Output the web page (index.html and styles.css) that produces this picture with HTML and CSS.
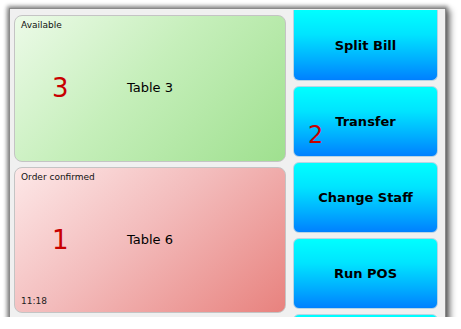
FILE: index.html
```html
<!DOCTYPE html>
<html>
<head>
<meta charset="utf-8">
<link rel="stylesheet" href="styles.css">
</head>
<body>
<div class="frame">
  <div class="tables">
    <div class="card available">
      <div class="status">Available</div>
      <div class="middle">
        <span class="count">3</span>
        <span class="name">Table 3</span>
      </div>
      <div class="time"></div>
    </div>
    <div class="card confirmed">
      <div class="status">Order confirmed</div>
      <div class="middle">
        <span class="count">1</span>
        <span class="name">Table 6</span>
      </div>
      <div class="time">11:18</div>
    </div>
    <div class="card next"></div>
  </div>
  <div class="actions">
    <div class="btn first">Split Bill</div>
    <div class="btn">Transfer<span class="badge">2</span></div>
    <div class="btn">Change Staff</div>
    <div class="btn">Run POS</div>
    <div class="btn"></div>
  </div>
</div>
</body>
</html>
```

FILE: styles.css
```css
html, body {
  margin: 0;
  padding: 0;
  background: #ffffff;
}

body {
  font-family: "DejaVu Sans", Verdana, sans-serif;
}

.frame {
  margin: 9px 0 0 10px;
  width: 435px;
  height: 308px;
  box-sizing: border-box;
  padding: 0 7px 0 4px;
  display: flex;
  gap: 7px;
  overflow: hidden;
  background: #f0f0f0;
  box-shadow: 0 0 0 1px #8a8a8a, 0 0 4px 3px rgba(0, 0, 0, 0.42), 3px 4px 6px 3px rgba(0, 0, 0, 0.38);
}

.tables {
  width: 272px;
  flex: none;
  padding-top: 6px;
  display: flex;
  flex-direction: column;
  gap: 5px;
}

.card {
  flex: none;
  height: 147px;
  box-sizing: border-box;
  border: 1px solid #c4c4c4;
  border-radius: 8px;
  padding: 4px 6px 5px 6px;
  display: grid;
  grid-template-rows: 11px 1fr 11px;
}

.card.confirmed {
  height: 146px;
}

.available {
  background: linear-gradient(135deg, #ecfae8 0%, #c6efbb 45%, #9fe08f 100%);
}

.confirmed {
  background: linear-gradient(140deg, #fde8e8 0%, #f3bcbc 45%, #e8827e 100%);
}

.next {
  background: #f7d0d0;
}

.status, .time {
  font-size: 9px;
  line-height: 11px;
  color: #111111;
  white-space: nowrap;
}

.time {
  color: #222222;
}

.middle {
  display: grid;
  grid-template-columns: 1fr auto 1fr;
  align-items: center;
}

.count {
  justify-self: start;
  padding-left: 31px;
  font-size: 26px;
  line-height: 26px;
  color: #c80000;
}

.name {
  font-size: 13px;
  line-height: 16px;
  color: #000000;
}

.actions {
  width: 145px;
  flex: none;
  padding-top: 1px;
  display: flex;
  flex-direction: column;
  gap: 5px;
}

.btn {
  position: relative;
  flex: none;
  height: 71px;
  box-sizing: border-box;
  border: 1px solid #b8d4e4;
  border-radius: 6px;
  background: linear-gradient(180deg, #00ffff 0%, #00e4ff 35%, #00b0ff 70%, #0080ff 100%);
  display: flex;
  align-items: center;
  justify-content: center;
  font-weight: bold;
  font-size: 13px;
  color: #000000;
}

.btn.first {
  border-top-left-radius: 0;
  border-top-right-radius: 0;
  border-top: none;
}

.badge {
  position: absolute;
  left: 14px;
  top: 36px;
  font-weight: normal;
  font-size: 24px;
  line-height: 24px;
  color: #c80000;
}
```
